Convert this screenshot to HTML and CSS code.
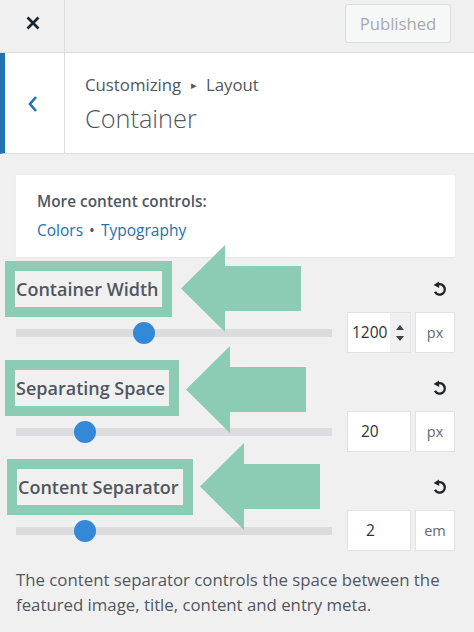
FILE: index.html
```html
<!DOCTYPE html>
<html lang="en">
<head>
<meta charset="utf-8">
<title>Customizer – Container</title>
<link rel="stylesheet" href="styles.css">
</head>
<body>
<div class="panel">
  <div class="topbar">
    <div class="close">
      <svg width="16" height="16" viewBox="0 0 16 16"><path d="M2.5 2.5 L13.5 13.5 M13.5 2.5 L2.5 13.5" stroke="#1d2327" stroke-width="2.6" stroke-linecap="butt"/></svg>
    </div>
    <button class="publish">Published</button>
  </div>
  <div class="header">
    <div class="back">
      <svg width="12" height="18" viewBox="0 0 12 18"><path d="M9 2 L3 9 L9 16" fill="none" stroke="#2271b1" stroke-width="2.6"/></svg>
    </div>
    <div class="titles">
      <div class="crumb">Customizing <span class="tri">▸</span> Layout</div>
      <div class="title">Container</div>
    </div>
  </div>
  <div class="content">
    <div class="notice">
      <div class="notice-head">More content controls:</div>
      <div class="notice-links"><a class="link">Colors</a> <span class="dot">•</span> <a class="link">Typography</a></div>
    </div>

    <div class="control">
      <div class="label-row">
        <span class="label">Container Width</span>
        <svg class="reset" width="16" height="16" viewBox="0 0 16 16"><path d="M6 3.4 A5.2 5.2 0 1 1 3 10.8" fill="none" stroke="#1d2327" stroke-width="2.4"/><path d="M1.6 4 L7 0.6 L7.2 7 Z" fill="#1d2327"/></svg>
      </div>
      <div class="slider-row">
        <div class="track"><span class="thumb" style="left: 117px"></span></div>
        <div class="num num-spin">1200<span class="spin"><svg width="10" height="26" viewBox="0 0 10 26"><path d="M1 10 L5 5 L9 10 Z M1 16 L5 21 L9 16 Z" fill="#3c434a"/></svg></span></div>
        <div class="unit">px</div>
      </div>
      <svg class="arrow a1" width="120" height="87" viewBox="0 0 120 87"><polygon points="0,43.5 44,0 44,21 120,21 120,66 44,66 44,87" fill="#8ccbb4"/></svg>
    </div>

    <div class="control">
      <div class="label-row">
        <span class="label">Separating Space</span>
        <svg class="reset" width="16" height="16" viewBox="0 0 16 16"><path d="M6 3.4 A5.2 5.2 0 1 1 3 10.8" fill="none" stroke="#1d2327" stroke-width="2.4"/><path d="M1.6 4 L7 0.6 L7.2 7 Z" fill="#1d2327"/></svg>
      </div>
      <div class="slider-row">
        <div class="track"><span class="thumb" style="left: 58px"></span></div>
        <div class="num">20</div>
        <div class="unit">px</div>
      </div>
      <svg class="arrow a2" width="120" height="87" viewBox="0 0 120 87"><polygon points="0,43.5 44,0 44,21 120,21 120,66 44,66 44,87" fill="#8ccbb4"/></svg>
    </div>

    <div class="control">
      <div class="label-row">
        <span class="label l3">Content Separator</span>
        <svg class="reset" width="16" height="16" viewBox="0 0 16 16"><path d="M6 3.4 A5.2 5.2 0 1 1 3 10.8" fill="none" stroke="#1d2327" stroke-width="2.4"/><path d="M1.6 4 L7 0.6 L7.2 7 Z" fill="#1d2327"/></svg>
      </div>
      <div class="slider-row">
        <div class="track"><span class="thumb" style="left: 58px"></span></div>
        <div class="num num-center">2</div>
        <div class="unit">em</div>
      </div>
      <svg class="arrow a3" width="120" height="87" viewBox="0 0 120 87"><polygon points="0,43.5 44,0 44,21 120,21 120,66 44,66 44,87" fill="#8ccbb4"/></svg>
    </div>

    <p class="desc">The content separator controls the space between the featured image, title, content and entry meta.</p>
  </div>
</div>
</body>
</html>
```

FILE: styles.css
```css
* { box-sizing: border-box; }
html, body { margin: 0; padding: 0; }
body {
  background: #f0f0f1;
  font-family: "Open Sans", "Noto Sans", sans-serif;
  color: #50575e;
  width: 474px;
  height: 632px;
  overflow: hidden;
}
.panel { width: 474px; }
.topbar {
  height: 53px;
  display: flex;
  align-items: center;
  border-bottom: 1px solid #dcdcde;
}
.close {
  width: 65px;
  height: 52px;
  border-right: 1px solid #dcdcde;
  display: flex;
  align-items: center;
  justify-content: center;
}
.close svg { margin-top: -6px; margin-left: 1px; }
.publish {
  margin-left: auto;
  margin-right: 23px;
  margin-top: -6px;
  width: 106px;
  height: 39px;
  border: 1px solid #dcdcde;
  border-radius: 3px;
  background: #f6f7f7;
  color: #a7aaad;
  font-family: inherit;
  font-size: 16.7px;
  padding: 0;
}
.header {
  height: 101px;
  background: #fff;
  display: flex;
  border-left: 5px solid #2271b1;
  border-bottom: 1px solid #dcdcde;
}
.back {
  width: 60px;
  border-right: 1px solid #dcdcde;
  display: flex;
  align-items: center;
  justify-content: center;
}
.back svg { margin-left: -3px; margin-top: 2px; }
.titles { padding: 19px 0 0 20px; }
.crumb { font-size: 16.8px; line-height: 25px; color: #50575e; }
.tri { font-size: 11px; position: relative; top: -2px; margin: 0 5px; }
.title { font-size: 25.3px; font-weight: 300; line-height: 36px; color: #50575e; margin-top: 1px; }

.content { padding: 21px 19px 0 16px; }
.notice {
  background: #fff;
  height: 82px;
  padding: 15px 21px;
  box-shadow: 0 1px 1px rgba(0,0,0,0.04);
}
.notice-head { font-size: 15.4px; font-weight: 600; line-height: 23px; color: #50575e; }
.notice-links { font-size: 15.5px; line-height: 23px; margin-top: 6px; }
.link { color: #2271b1; }
.dot { color: #50575e; margin: 0 2px; }

.control { position: relative; margin-top: 4px; }
.control + .control { margin-top: 7px; }
.label-row {
  height: 56px;
  display: flex;
  align-items: center;
  justify-content: space-between;
}
.label {
  margin-left: -11px;
  height: 56px;
  border: 10px solid #8ccbb4;
  padding: 0 4px 0 1px;
  font-size: 18px;
  font-weight: 600;
  line-height: 36px;
  color: #50575e;
}
.l3 { margin-left: -9px; }
.reset { margin-right: 7px; }
.slider-row {
  height: 41px;
  margin-top: -5px;
  display: flex;
  align-items: center;
}
.track {
  flex: 1;
  height: 8px;
  background: #dcdcde;
  position: relative;
  margin-right: 15px;
}
.thumb {
  position: absolute;
  top: -7px;
  width: 22px;
  height: 22px;
  border-radius: 50%;
  background: #3388d8;
}
.num {
  width: 64px;
  height: 41px;
  background: #fff;
  border: 1px solid #e2e2e4;
  font-size: 15.5px;
  line-height: 39px;
  color: #2c3338;
  padding-left: 13px;
  display: flex;
}
.num-spin { padding-left: 4px; }
.num-center { padding-left: 18px; }
.spin {
  margin-left: auto;
  width: 20px;
  height: 39px;
  background: #f0f0f1;
  display: flex;
  align-items: center;
  justify-content: center;
}
.unit {
  width: 40px;
  height: 41px;
  margin-left: 4px;
  background: #fff;
  border: 1px solid #e2e2e4;
  font-size: 14.5px;
  line-height: 39px;
  text-align: center;
  color: #646970;
}
.arrow { position: absolute; }
.a1 { left: 165px; top: -16px; }
.a2 { left: 170px; top: -14px; }
.a3 { left: 184px; top: -16px; }
.desc {
  margin: 16px 0 0;
  font-size: 16.8px;
  line-height: 25px;
  color: #50575e;
}
```
